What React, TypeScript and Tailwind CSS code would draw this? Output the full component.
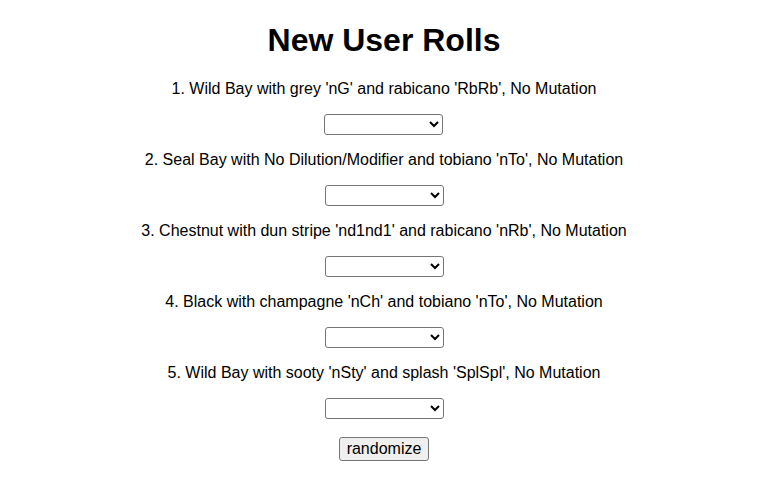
import { useState } from "react"

const rolls = [
  "1. Wild Bay with grey 'nG' and rabicano 'RbRb', No Mutation",
  "2. Seal Bay with No Dilution/Modifier and tobiano 'nTo', No Mutation",
  "3. Chestnut with dun stripe 'nd1nd1' and rabicano 'nRb', No Mutation",
  "4. Black with champagne 'nCh' and tobiano 'nTo', No Mutation",
  "5. Wild Bay with sooty 'nSty' and splash 'SplSpl', No Mutation",
]

export default function App() {
  const [picks, setPicks] = useState<string[]>(rolls.map(() => ""))

  return (
    <div className="flex flex-col items-center text-black bg-white font-['Liberation_Sans',Arial,sans-serif] min-h-[480px]">
      <h1 className="mt-[22px] mb-[21px] text-[32px] leading-[37px] font-bold">New User Rolls</h1>
      {rolls.map((roll, i) => (
        <div key={i} className="flex flex-col items-center">
          <p className="text-base leading-[18px] mb-4">{roll}</p>
          <select
            value={picks[i]}
            onChange={(e) => {
              const next = [...picks]
              next[i] = e.target.value
              setPicks(next)
            }}
            className="w-[119px] h-[21px] border border-[#767676] rounded-[3px] bg-white text-[13px] mb-4"
          >
            <option value=""></option>
            <option value="keep">keep</option>
            <option value="reroll">reroll</option>
          </select>
        </div>
      ))}
      <button className="mt-[2px] h-[24px] px-[7px] border border-[#767676] rounded-[3px] bg-[#efefef] text-base leading-[18px]">
        randomize
      </button>
    </div>
  )
}
